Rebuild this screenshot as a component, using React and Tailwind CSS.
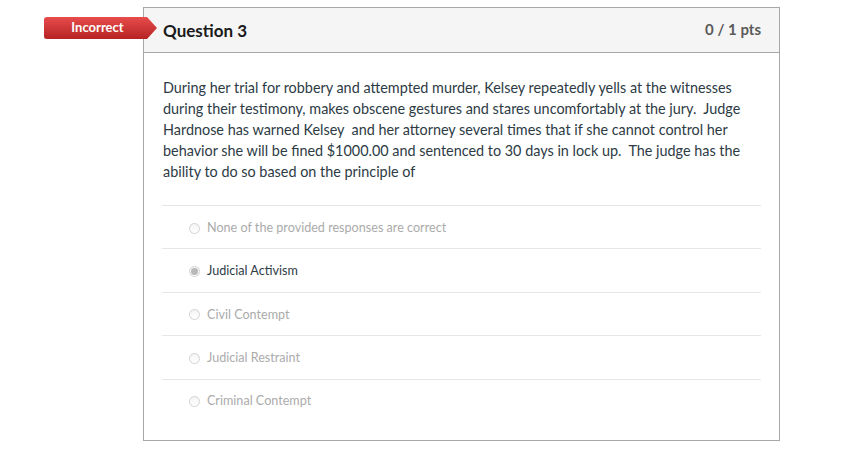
import React from "react";

const lines = [
  "During her trial for robbery and attempted murder, Kelsey repeatedly yells at the witnesses",
  "during their testimony, makes obscene gestures and stares uncomfortably at the jury.  Judge",
  "Hardnose has warned Kelsey  and her attorney several times that if she cannot control her",
  "behavior she will be fined $1000.00 and sentenced to 30 days in lock up.  The judge has the",
  "ability to do so based on the principle of",
];

const answers = [
  { text: "None of the provided responses are correct", selected: false },
  { text: "Judicial Activism", selected: true },
  { text: "Civil Contempt", selected: false },
  { text: "Judicial Restraint", selected: false },
  { text: "Criminal Contempt", selected: false },
];

const Radio = ({ selected }) => (
  <span className="flex h-[11px] w-[11px] items-center justify-center rounded-full border border-[#d2d2d2] bg-gradient-to-b from-[#f4f4f4] to-white">
    {selected && <span className="h-[7px] w-[7px] rounded-full bg-[#b8b8b8]" />}
  </span>
);

export default function App() {
  return (
    <div className="relative h-[466px] w-[866px] bg-white pl-[143px] pt-[7px] font-['Lato',_'Noto_Sans',_sans-serif]">
      <div className="absolute left-[44px] top-[17px] z-10 flex h-[22px] w-[113px] items-center justify-center rounded-l-[3px] bg-gradient-to-b from-[#e84c4c] to-[#b52222] pl-[4px] pr-[10px] text-[13px] font-bold text-white shadow-[0_1px_1px_rgba(0,0,0,0.25)] [clip-path:polygon(0_0,103px_0,113px_50%,103px_100%,0_100%)]">
        Incorrect
      </div>

      <div className="w-[637px] border border-[#a7a7a7] bg-white">
        <div className="flex h-[45px] items-start justify-between border-b border-[#a7a7a7] bg-[#f5f5f5] pl-[19px] pr-[18px]">
          <h2 className="mt-[13px] text-[17px] font-bold leading-[20px] text-[#1a1a1a]">Question 3</h2>
          <span className="mt-[12px] text-[15px] font-bold leading-[18px] text-[#5a5a5a]">0 / 1 pts</span>
        </div>

        <div className="px-[18px] pb-[18px] pt-[24px]">
          <div className="pl-[1px] text-[14.4px] leading-[21px] text-[#2d3b45]">
            {lines.map((line, i) => (
              <p key={i} className="whitespace-pre">
                {line}
              </p>
            ))}
          </div>

          <div className="mt-[23px]">
            {answers.map((a, i) => (
              <div
                key={i}
                className="flex h-[43.4px] items-center gap-[7px] border-t border-[#e6e6e6] pl-[27px] pt-[2px]"
              >
                <Radio selected={a.selected} />
                <span
                  className={
                    a.selected
                      ? "text-[12.6px] text-[#2d3b45]"
                      : "text-[12.6px] text-[#ababab]"
                  }
                >
                  {a.text}
                </span>
              </div>
            ))}
          </div>
        </div>
      </div>
    </div>
  );
}
